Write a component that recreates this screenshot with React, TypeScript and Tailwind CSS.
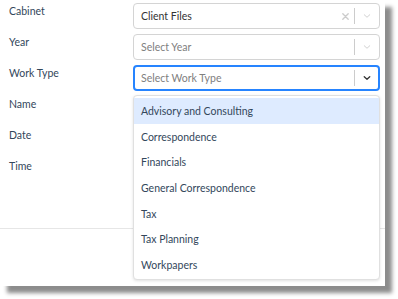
import React from "react";

const font = { fontFamily: 'Lato, "Open Sans", sans-serif' };

function Chevron({ dark }: { dark?: boolean }) {
  return (
    <svg width="10" height="10" viewBox="0 0 20 20" className="block">
      <path
        d="M4.5 7.5 L10 12.5 L15.5 7.5"
        fill="none"
        stroke={dark ? "#333" : "#ccc"}
        strokeWidth={dark ? 2.6 : 1.8}
        strokeLinecap="round"
        strokeLinejoin="round"
      />
    </svg>
  );
}

function Cross() {
  return (
    <svg width="9" height="9" viewBox="0 0 20 20" className="block">
      <path d="M4 4 L16 16 M16 4 L4 16" stroke="#ccc" strokeWidth="3" strokeLinecap="round" />
    </svg>
  );
}

function Select({
  value,
  placeholder,
  clear,
  focused,
}: {
  value?: string;
  placeholder?: string;
  clear?: boolean;
  focused?: boolean;
}) {
  return (
    <div
      className={`flex h-[26px] w-[247px] items-center rounded-[4px] bg-white ${
        focused ? "border-2 border-[#2684ff] pl-[6px]" : "border border-[#d4d4d4] pl-[7px]"
      }`}
    >
      <div className={`flex-1 pt-[2px] text-[10.5px] ${value ? "text-[#333]" : "text-[#808080]"}`}>
        {value ?? placeholder}
      </div>
      {clear && (
        <div className="flex w-[18px] justify-center">
          <Cross />
        </div>
      )}
      <div className="h-[16px] w-px bg-[#cccccc]" />
      <div className={`flex justify-center ${focused ? "w-[23px]" : "w-[24px]"}`}>
        <Chevron dark={focused} />
      </div>
    </div>
  );
}

function Row({ label, children }: { label: string; children?: React.ReactNode }) {
  return (
    <div className="flex h-[26px]">
      <div className="w-[133px] pl-[9px] pt-[1px] text-[10.5px] leading-[14px] text-[#33475b]">{label}</div>
      {children}
    </div>
  );
}

const options = [
  "Advisory and Consulting",
  "Correspondence",
  "Financials",
  "General Correspondence",
  "Tax",
  "Tax Planning",
  "Workpapers",
];

export default function App() {
  return (
    <div className="h-[299px] w-[398px] bg-white" style={font}>
      <div className="relative h-[286px] w-[385px] bg-white shadow-[7px_7px_4px_rgba(0,0,0,0.45)]">
        <div className="flex flex-col gap-[5px] pt-[3px]">
          <Row label="Cabinet">
            <Select value="Client Files" clear />
          </Row>
          <Row label="Year">
            <Select placeholder="Select Year" />
          </Row>
          <Row label="Work Type">
            <Select placeholder="Select Work Type" focused />
          </Row>
          <Row label="Name" />
          <Row label="Date" />
          <Row label="Time" />
        </div>
        <div className="mt-[44px] h-px w-full bg-[#e6e6e6]" />
        <div className="absolute left-[133px] top-[95px] w-[247px] rounded-[4px] border border-[#e0e0e0] bg-white pt-[2px] pb-[1px] shadow-[0_1px_3px_rgba(0,0,0,0.12)]">
          {options.map((o, i) => (
            <div
              key={o}
              className={`flex h-[25.7px] items-center pl-[7px] pt-[2px] text-[10.5px] text-[#33475b] ${
                i === 0 ? "bg-[#deebff]" : ""
              }`}
            >
              {o}
            </div>
          ))}
        </div>
      </div>
    </div>
  );
}
